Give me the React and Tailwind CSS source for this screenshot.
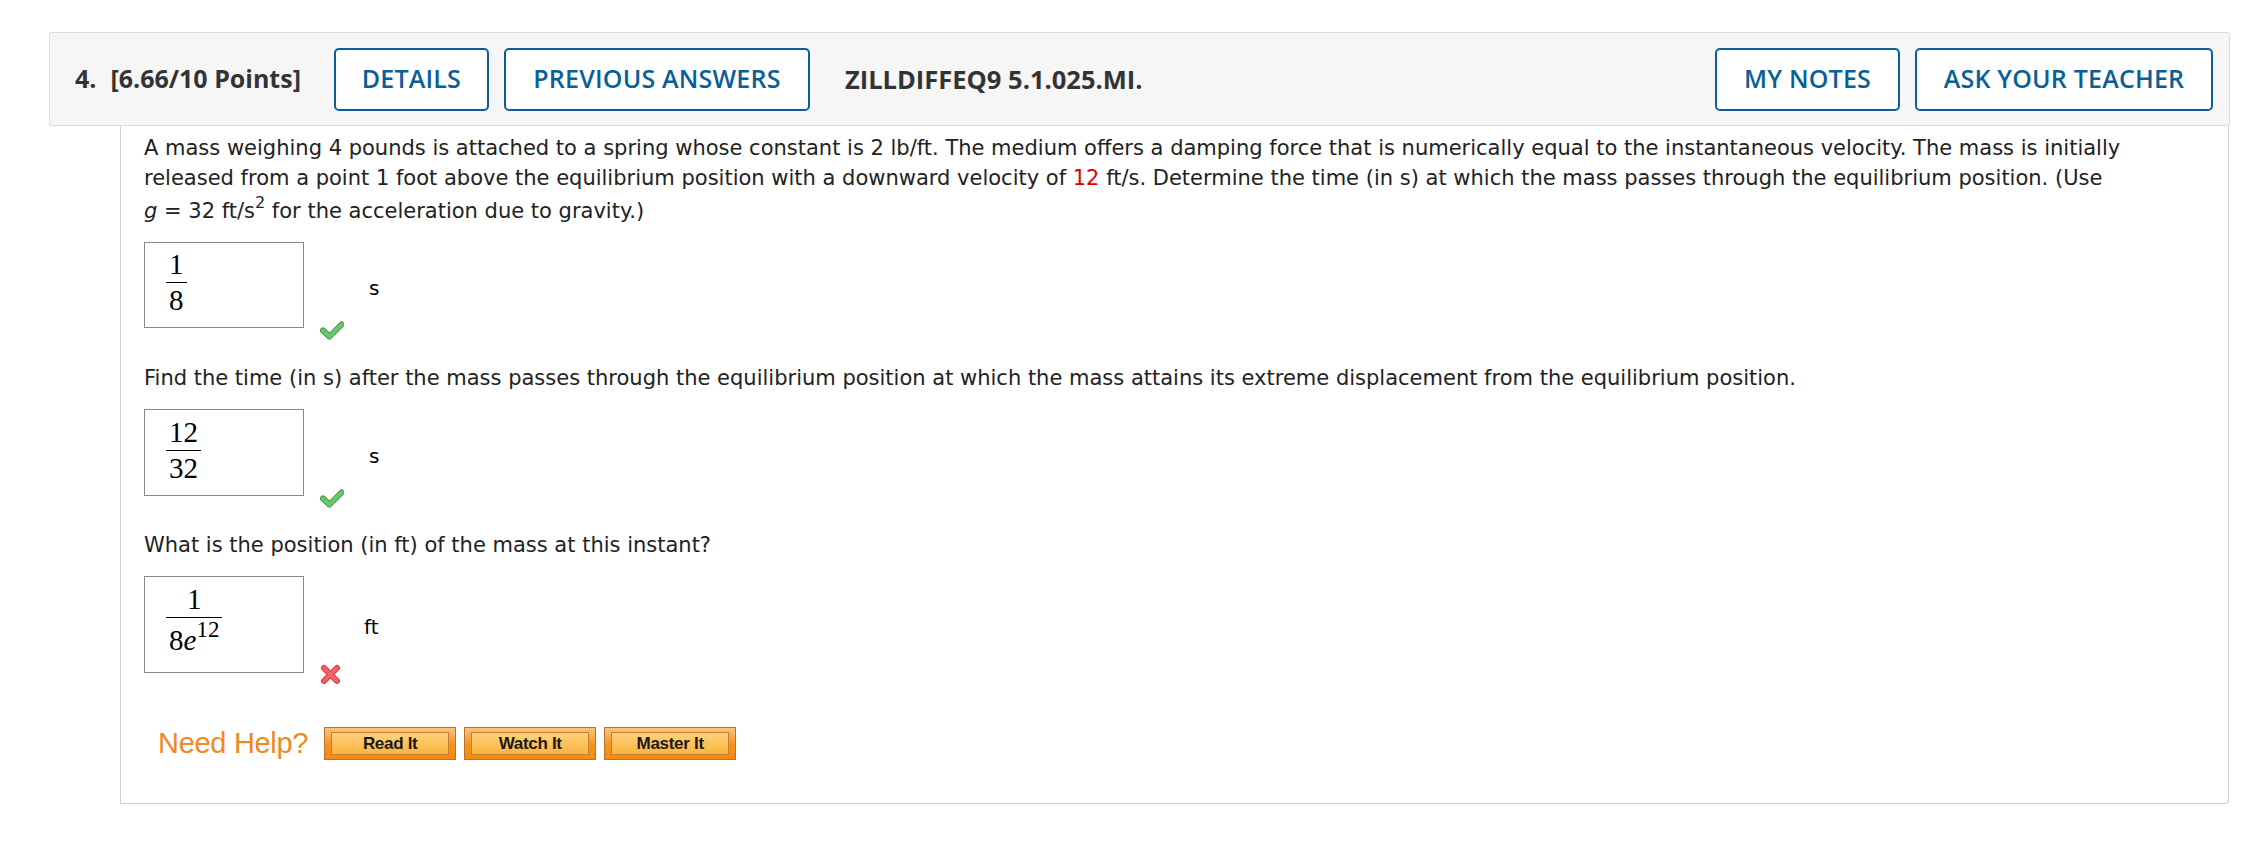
import React from 'react';

const blueBtn =
  "flex items-center justify-center h-[63px] rounded-[5px] border-[2.5px] border-[#0a6096] bg-white text-[#0a6096] text-[25px] font-semibold tracking-[0.2px] font-['Open_Sans',sans-serif]";

const CheckIcon = () => (
  <svg width="24" height="19" viewBox="0 0 24 19">
    <path d="M3 9.5 L9.5 15.5 L21.5 3.5" fill="none" stroke="#3f9a43" strokeWidth="6" strokeLinecap="round" strokeLinejoin="round" />
    <path d="M3 9.5 L9.5 15.5 L21.5 3.5" fill="none" stroke="#6cc56c" strokeWidth="4" strokeLinecap="round" strokeLinejoin="round" />
  </svg>
);

const CrossIcon = () => (
  <svg width="21" height="21" viewBox="0 0 21 21">
    <path d="M4 4 L17 17 M17 4 L4 17" fill="none" stroke="#e23a44" strokeWidth="6" strokeLinecap="round" />
    <path d="M4 4 L17 17 M17 4 L4 17" fill="none" stroke="#f5646c" strokeWidth="3.5" strokeLinecap="round" />
  </svg>
);

const Fraction = ({ num, den, denGap = 'mt-[3px]' }) => (
  <div className="inline-flex flex-col items-center font-['Liberation_Serif',serif] text-[29px] text-black">
    <span className="leading-none px-[3px]">{num}</span>
    <span className="w-full border-t border-black mt-[3px]" />
    <span className={`leading-none px-[3px] ${denGap}`}>{den}</span>
  </div>
);

const AnswerRow = ({ height, pt, fraction, icon, iconMl, unit, unitMl, unitPt }) => (
  <div className="flex">
    <div className={`w-[160px] border border-[#888] pl-[21px] ${height} ${pt}`}>{fraction}</div>
    <div className={`self-end -mb-[12px] ${iconMl}`}>{icon}</div>
    <div className={`self-center text-[20px] text-black ${unitMl} ${unitPt}`}>{unit}</div>
  </div>
);

const HelpButton = ({ label }) => (
  <div className="w-[132px] h-[33px] border border-[#b5732f] bg-gradient-to-b from-[#fcc27a] via-[#f7941e] to-[#f38a12] px-[6px] py-[4px]">
    <div className="h-full border border-[#c3812f] bg-gradient-to-b from-[#fdd27a] to-[#fbb33a] flex items-center justify-center text-[17px] font-bold text-[#1a1a1a] tracking-[-0.3px] font-['Liberation_Sans',sans-serif]">
      {label}
    </div>
  </div>
);

export default function App() {
  return (
    <div className="w-[2256px] h-[861px] bg-white pt-[32px] pl-[49px] font-['DejaVu_Sans',sans-serif]">
      <div className="flex items-center h-[94px] w-[2181px] border border-[#dcdcdc] bg-[#f6f6f6] rounded-[3px] pl-[25px] pr-[16px] font-['Open_Sans',sans-serif] text-[#333]">
        <span className="text-[25px] font-bold">4.</span>
        <span className="ml-[14px] text-[25px] font-bold">[6.66/10 Points]</span>
        <button className={`${blueBtn} ml-[33px] w-[155px]`}>DETAILS</button>
        <button className={`${blueBtn} ml-[15px] w-[306px]`}>PREVIOUS ANSWERS</button>
        <span className="ml-[35px] text-[25.5px] font-bold">ZILLDIFFEQ9 5.1.025.MI.</span>
        <button className={`${blueBtn} ml-auto w-[185px]`}>MY NOTES</button>
        <button className={`${blueBtn} ml-[15px] w-[298px]`}>ASK YOUR TEACHER</button>
      </div>

      <div className="ml-[71px] w-[2109px] h-[678px] border-x border-b border-[#cfcfcf] rounded-br-[4px] pl-[23px] pr-[40px] pt-[7px] text-[21px] text-[#222]">
        <p className="leading-[30px]">
          A mass weighing 4 pounds is attached to a spring whose constant is 2 lb/ft. The medium offers a damping force that is
          numerically equal to the instantaneous velocity. The mass is initially released from a point 1 foot above the equilibrium
          position with a downward velocity of <span className="text-[#e00000]">12</span> ft/s. Determine the time (in s) at which the
          mass passes through the equilibrium position. (Use{' '}
          <span className="whitespace-nowrap inline-block pt-[3px]">
            <i>g</i> = 32 ft/s<sup className="text-[16px] -top-[10px]">2</sup>
          </span>{' '}
          for the acceleration due to gravity.)
        </p>

        <div className="mt-[16px]">
          <AnswerRow
            height="h-[86px]"
            pt="pt-[7px]"
            fraction={<Fraction num="1" den="8" />}
            icon={<CheckIcon />}
            iconMl="ml-[16px]"
            unit="s"
            unitMl="ml-[25px]"
            unitPt="pt-[6px]"
          />
        </div>

        <p className="leading-[30px] mt-[35px]">
          Find the time (in s) after the mass passes through the equilibrium position at which the mass attains its extreme displacement
          from the equilibrium position.
        </p>

        <div className="mt-[16px]">
          <AnswerRow
            height="h-[87px]"
            pt="pt-[8px]"
            fraction={<Fraction num="12" den="32" />}
            icon={<CheckIcon />}
            iconMl="ml-[16px]"
            unit="s"
            unitMl="ml-[25px]"
            unitPt="pt-[6px]"
          />
        </div>

        <p className="leading-[30px] mt-[34px]">What is the position (in ft) of the mass at this instant?</p>

        <div className="mt-[16px]">
          <AnswerRow
            height="h-[97px]"
            pt="pt-[8px]"
            fraction={
              <Fraction
                num="1"
                denGap="mt-[8px]"
                den={
                  <span>
                    8<i>e</i>
                    <span className="relative -top-[13px] text-[23px]">12</span>
                  </span>
                }
              />
            }
            icon={<CrossIcon />}
            iconMl="ml-[16px]"
            unit="ft"
            unitMl="ml-[23px]"
            unitPt="pt-[5px]"
          />
        </div>

        <div className="flex items-center mt-[49px] pl-[14px]">
          <span className="text-[29px] text-[#f0891f] font-['Liberation_Sans',sans-serif] tracking-[-0.3px]">Need Help?</span>
          <div className="ml-[16px] flex gap-[8px]">
            <HelpButton label="Read It" />
            <HelpButton label="Watch It" />
            <HelpButton label="Master It" />
          </div>
        </div>
      </div>
    </div>
  );
}
